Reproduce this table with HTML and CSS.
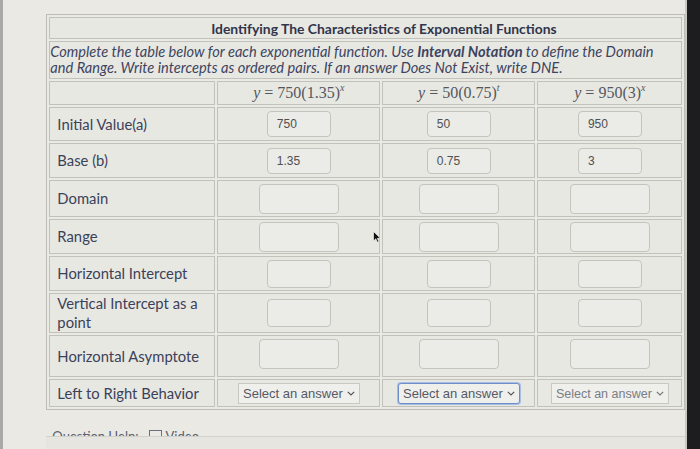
FILE: index.html
```html
<!DOCTYPE html>
<html>
<head>
<meta charset="utf-8">
<link rel="stylesheet" href="styles.css">
</head>
<body>
<div class="screen">
  <div class="edge-left"></div>
  <div class="page">
    <table class="grid">
      <colgroup>
        <col class="c1"><col class="c2"><col class="c3"><col class="c4">
      </colgroup>
      <tr class="r-title"><td colspan="4" class="title">Identifying The Characteristics of Exponential Functions</td></tr>
      <tr class="r-instr"><td colspan="4" class="instr">Complete the table below for each exponential function. Use <b>Interval Notation</b> to define the Domain<br>and Range. Write intercepts as ordered pairs. If an answer Does Not Exist, write DNE.</td></tr>
      <tr class="r-head">
        <td></td>
        <td class="math"><i>y</i> = 750(1.35)<sup><i>x</i></sup></td>
        <td class="math"><i>y</i> = 50(0.75)<sup><i>t</i></sup></td>
        <td class="math"><i>y</i> = 950(3)<sup><i>x</i></sup></td>
      </tr>
      <tr class="r-iv">
        <td class="label">Initial Value(a)</td>
        <td class="cell"><span class="box small">750</span></td>
        <td class="cell"><span class="box small">50</span></td>
        <td class="cell"><span class="box small">950</span></td>
      </tr>
      <tr class="r-base">
        <td class="label">Base (b)</td>
        <td class="cell"><span class="box small">1.35</span></td>
        <td class="cell"><span class="box small">0.75</span></td>
        <td class="cell"><span class="box small">3</span></td>
      </tr>
      <tr class="r-dom">
        <td class="label">Domain</td>
        <td class="cell"><span class="box"></span></td>
        <td class="cell"><span class="box"></span></td>
        <td class="cell"><span class="box"></span></td>
      </tr>
      <tr class="r-range">
        <td class="label">Range</td>
        <td class="cell"><span class="box"></span></td>
        <td class="cell"><span class="box"></span></td>
        <td class="cell"><span class="box"></span></td>
      </tr>
      <tr class="r-hi">
        <td class="label">Horizontal Intercept</td>
        <td class="cell"><span class="box mid"></span></td>
        <td class="cell"><span class="box mid"></span></td>
        <td class="cell"><span class="box mid"></span></td>
      </tr>
      <tr class="r-vi">
        <td class="label">Vertical Intercept as a<br>point</td>
        <td class="cell"><span class="box mid"></span></td>
        <td class="cell"><span class="box mid"></span></td>
        <td class="cell"><span class="box mid"></span></td>
      </tr>
      <tr class="r-ha">
        <td class="label">Horizontal Asymptote</td>
        <td class="cell top"><span class="box"></span></td>
        <td class="cell top"><span class="box"></span></td>
        <td class="cell top"><span class="box"></span></td>
      </tr>
      <tr class="r-lr">
        <td class="label">Left to Right Behavior</td>
        <td class="cell"><span class="select">Select an answer <svg class="chev" viewBox="0 0 8 5" width="8" height="5"><path d="M0.8 0.8 L4 4 L7.2 0.8" fill="none" stroke="#555" stroke-width="1.2"/></svg></span></td>
        <td class="cell"><span class="select active">Select an answer <svg class="chev" viewBox="0 0 8 5" width="8" height="5"><path d="M0.8 0.8 L4 4 L7.2 0.8" fill="none" stroke="#555" stroke-width="1.2"/></svg></span></td>
        <td class="cell"><span class="select light">Select an answer <svg class="chev" viewBox="0 0 8 5" width="8" height="5"><path d="M0.8 0.8 L4 4 L7.2 0.8" fill="none" stroke="#777" stroke-width="1.2"/></svg></span></td>
      </tr>
    </table>
    <div class="help"><span>Question Help:</span> <span class="vid-icon"></span> <span>Video</span></div>
    <div class="bottom-bar"></div>
    <svg class="cursor" viewBox="0 0 8 12" width="8" height="12"><path d="M0.5 0.5 L0.5 10 L2.8 7.8 L4.4 11.3 L5.8 10.6 L4.3 7.3 L7.4 7.3 Z" fill="#111" stroke="#fff" stroke-width="0.6"/></svg>
  </div>
  <div class="edge-right"></div>
</div>
</body>
</html>
```
FILE: styles.css
```css
html, body {
  margin: 0;
  padding: 0;
}
body {
  width: 700px;
  height: 449px;
  overflow: hidden;
  background: #e9e8e2;
  font-family: Lato, "Open Sans", sans-serif;
}
.screen {
  display: flex;
  height: 449px;
}
.edge-left {
  width: 4px;
  background: #a8a8a6;
}
.page {
  position: relative;
  flex: 1;
  display: flex;
  flex-direction: column;
  background: #eae9e3;
  padding: 14px 0 0 43px;
}
.edge-right {
  width: 15px;
  background: #1d1d1f;
  border-left: 2px solid #c9c9c4;
}
.grid {
  width: 635px;
  table-layout: fixed;
  border-collapse: separate;
  border-spacing: 2px;
  border: 1px solid #bdbdb7;
  color: #3b4158;
}
.c1 { width: 166px; }
.c2 { width: 163px; }
.c3 { width: 153px; }
.c4 { width: 145px; }
.grid td {
  border: 1px solid #c2c2bc;
  background: #e8e8e3;
  padding: 0;
}
.r-title { height: 22px; }
.r-instr { height: 38px; }
.r-head { height: 24px; }
.r-iv { height: 34px; }
.r-base { height: 35px; }
.r-dom { height: 37px; }
.r-range { height: 35px; }
.r-hi { height: 35px; }
.r-vi { height: 36px; }
.r-ha { height: 42px; }
.r-lr { height: 28px; }
.title {
  text-align: center;
  font-weight: 700;
  font-size: 13.9px;
  color: #30354a;
  padding-left: 36px !important;
}
.instr {
  font-style: italic;
  font-size: 14.6px;
  line-height: 16px;
  padding: 2px 2px 2px 5px;
  color: #3d4460;
  white-space: nowrap;
}
.instr b {
  font-weight: 700;
}
.math {
  text-align: center;
  font-family: "Liberation Serif", "DejaVu Serif", serif;
  font-size: 16px;
  color: #555760;
}
.math sup {
  font-size: 10px;
  vertical-align: 7px;
  line-height: 0;
}
.label {
  font-size: 14.8px;
  line-height: 19px;
  padding-left: 7px !important;
  color: #3b4158;
}
.cell {
  text-align: center;
  vertical-align: middle;
}
.cell.top {
  vertical-align: top;
  padding-top: 3px !important;
}
.box {
  display: inline-block;
  box-sizing: border-box;
  width: 80px;
  height: 30px;
  border: 1px solid #c4c4bf;
  border-radius: 4px;
  background: #ebebe7;
  vertical-align: middle;
  text-align: left;
  font-family: "Liberation Sans", Arial, sans-serif;
  font-size: 12px;
  line-height: 26px;
  padding-left: 9px;
  color: #505050;
}
.box.small {
  width: 64px;
  height: 26px;
  line-height: 24px;
}
.box.mid {
  width: 64px;
  height: 28px;
}
.select {
  display: inline-flex;
  align-items: center;
  gap: 4px;
  height: 19px;
  padding: 0 4px;
  border: 1px solid #c9c9c4;
  background: #efefec;
  font-family: "Liberation Sans", Arial, sans-serif;
  font-size: 13px;
  color: #555a66;
}
.select.active {
  border: 1px solid #6f8fcc;
  border-radius: 3px;
  box-shadow: 0 0 0 1px #a9bde2;
}
.select.light {
  color: #7a7d86;
  font-size: 12.5px;
}
.chev {
  display: block;
}
.help {
  margin-top: 17px;
  margin-left: 6px;
  height: 9px;
  overflow: hidden;
  font-size: 13px;
  line-height: 18px;
  color: #5a5f70;
  display: flex;
  align-items: flex-start;
  gap: 4px;
}
.vid-icon {
  display: inline-block;
  width: 11px;
  height: 8px;
  border: 1px solid #6a6f80;
  margin-top: 3px;
  margin-left: 6px;
}
.bottom-bar {
  flex: 1;
  border-top: 1px solid #d2d1cb;
  background: #e6e5df;
}
.cursor {
  position: absolute;
  left: 370px;
  top: 231px;
}
```
